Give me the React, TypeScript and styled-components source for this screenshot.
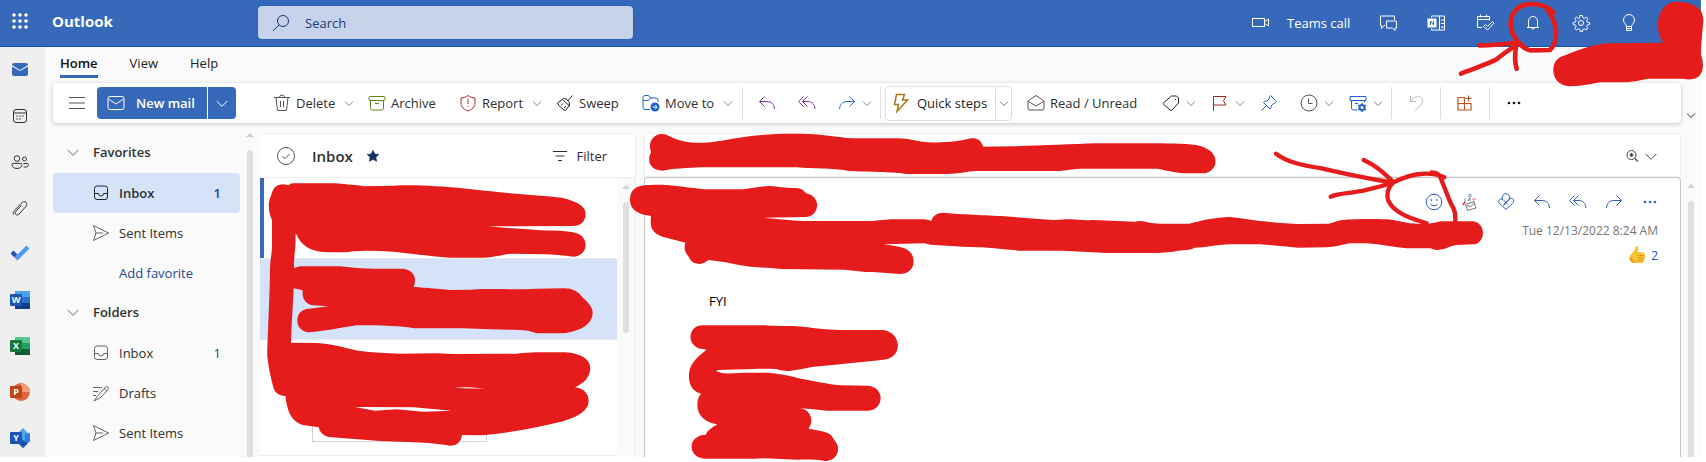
import React from "react";
import styled, { createGlobalStyle, css } from "styled-components";

const blue = "#3769ba";
const selected = "#d5e3fa";
const redInk = "#e61c1c";

const GlobalStyle = createGlobalStyle`
  * { box-sizing: border-box; }
  body { margin: 0; background: #fff; }
  body, button, input {
    font-family: "Open Sans", "Noto Sans", sans-serif;
    font-size: 13px;
    color: #303030;
  }
  button { border: 0; background: none; padding: 0; cursor: pointer; }
  ul { list-style: none; margin: 0; padding: 0; }
  svg { display: block; flex: none; }
`;

/* ---------- icons ---------- */

const shapes: Record<string, React.ReactNode> = {
  waffle: (
    <g fill="currentColor" stroke="none">
      {[4, 10, 16].map((y) => [4, 10, 16].map((x) => <circle key={`${x}-${y}`} cx={x} cy={y} r="1.8" />))}
    </g>
  ),
  search: <><circle cx="12" cy="8" r="5.5" /><path d="M8 12 2 18" /></>,
  video: <><rect x="1.5" y="5.5" width="12" height="8" /><path d="M13.5 8.5 17.5 6v7l-4-2.5" /></>,
  chat: <><path d="M6 12.500H5l-2.500 3v-3h-1v-9.500h14v4" /><path d="M7.500 8h10v7h-1.500v2.500L13.500 15h-6z" /></>,
  onenote: (
    <>
      <rect x="1" y="6" width="8" height="8" fill="currentColor" />
      <path d="M3.500 12V8l3 4V8" stroke={blue} />
      <path d="M4.500 4.500V3h13v14h-13v-1.500M12.500 3v14M14 7h3M14 10.500h3M14 14h3" />
    </>
  ),
  calCheck: <><path d="M7 14.500H2.500v-11h12v4M2.500 6.500h12M5.500 1.500v3M11.500 1.500v3" /><path d="m8.500 13.500 2-2 2 2 5-5 1.500 1.500-6.500 7z" /></>,
  bell: <path d="M4 14.500h12M5.500 14.500V8a4.500 4.500 0 0 1 9 0v6.500M8.500 14.500a1.500 1.500 0 0 0 3 0" />,
  gear: (
    <>
      <circle cx="10" cy="10" r="2.500" />
      <path d="m8.500 2.500.5 2.200-1.700.8L5.500 4 3.800 5.700 5 7.500l-.6 1.600-2.200.4v2l2.200.5.7 1.600-1.300 1.800L5.500 17l1.800-1.200 1.700.7.400 2h2l.4-2 1.600-.7 1.800 1.200 1.600-1.600-1.200-1.800.7-1.600 2.200-.5v-2l-2.200-.4-.6-1.600 1.100-1.800L15.100 4l-1.700 1.300-1.600-.7-.4-2.100z" />
    </>
  ),
  bulb: <path d="M7.500 13.500C7.500 11 4.500 10.500 4.500 7a5.500 5.500 0 0 1 11 0c0 3.500-3 4-3 6.500zM7.500 13.500v4h5v-4M7.500 15.500h5" />,
  mailSolid: (
    <g stroke="none">
      <path d="M2 5a2 2 0 0 1 2-2h12a2 2 0 0 1 2 2L10 10z" fill={blue} />
      <path d="M2 6.500 10 11l8-4.500V14a2 2 0 0 1-2 2H4a2 2 0 0 1-2-2z" fill={blue} />
    </g>
  ),
  calendar: (
    <>
      <rect x="3.500" y="3.500" width="13" height="13" rx="2.500" /><path d="M3.500 7h13" />
      <path d="M6.500 10h1M9.500 10h1M12.500 10h1M6.500 13h1M9.500 13h1" strokeWidth="1.500" />
    </>
  ),
  people: (
    <>
      <circle cx="7" cy="6.500" r="2.800" /><circle cx="14.500" cy="7" r="2" />
      <path d="M2 12.500c0-.8.500-1.200 1.200-1.200h7.600c.7 0 1.200.4 1.200 1.200 0 2.500-2 4-5 4s-5-1.500-5-4zM13.500 11.500h3.800c.7 0 1.200.4 1.200 1 0 2-2 3-5 2.500" />
    </>
  ),
  clip: <path d="m4.500 12.500 6.500-7c2-2.200 3.800-2.500 5-1.200s1 3-.5 4.700l-6.500 7c-1.200 1.200-2.500 1.200-3.300.4s-.7-2 .3-3.200l5.500-6M4.500 12.500c-1.500 1.600-1.500 3-1 4" />,
  menu: <path d="M2 4.500h16M2 10h16M2 15.500h16" />,
  mail: <><rect x="2" y="3.500" width="16" height="13" rx="2" /><path d="m2.500 6 7.500 5 7.500-5" /></>,
  trash: <path d="M2 4.500h16M4 4.500 5.500 17.500h9L16 4.500M7.500 4.500a2.500 2.500 0 0 1 5 0M8.500 8v6M11.500 8v6" />,
  archive: <><rect x="2" y="3.500" width="16" height="4" rx="1" /><path d="M3.500 7.500v8a1.500 1.500 0 0 0 1.500 1.500h10a1.500 1.500 0 0 0 1.500-1.500v-8M8 10.500h4" /></>,
  shield: <><path d="M10 2.500c2 1.500 4.500 2.300 7 2.500v5c0 4-3 6.500-7 8-4-1.500-7-4-7-8V5c2.500-.2 5-1 7-2.500zM10 6v5" /><path d="M10 13v1" /></>,
  broom: <path d="m17.500 2.500-5 5.500M7.500 6.500l7 6.500M8.500 5.500c2 0 3.500.5 4.500 2 1.200 1.500 1.500 3 1.500 4.500l-4 5.500c-3-1-6.500-4-8-7.500zM6 12.500l2-2M9 15l2-2" />,
  moveTo: (
    <>
      <path d="M9 16.500H4a2 2 0 0 1-2-2v-10a2 2 0 0 1 2-2h3.500l2 2.500H15a2 2 0 0 1 2 2v2M2 7.500h5.500L9.500 5" />
      <circle cx="14" cy="14" r="4.500" fill="currentColor" stroke="none" />
      <path d="M11.500 14h4.500M14.200 12l2 2-2 2" stroke="#fff" />
    </>
  ),
  reply: <path d="M7.500 3.500 2.500 8.500l5 5M2.500 8.500H10c4.500 0 7 2.500 7.500 7.500" />,
  replyAll: <path d="m6.500 3.500-5 5 5 5M10.500 3.500l-5 5 5 5M5.500 8.500H11c4 0 6.500 2.500 7 7.500" />,
  forward: <path d="m12.500 3.500 5 5-5 5M17.500 8.500H10c-4.500 0-7 2.500-7.500 7.500" />,
  bolt: <path d="M5.500 1.500h8l-2 5.500h5L6 18.500 7.500 11.500h-4z" strokeWidth="1.500" />,
  openMail: <path d="M2 8 10 2.500 18 8v7a2 2 0 0 1-2 2H4a2 2 0 0 1-2-2zM2.500 8.500 10 13l7.500-4.500" />,
  tag: <><path d="M10.500 3h5L17.500 5v5l-6.500 7a1.500 1.500 0 0 1-2 0L2.800 11.500a1.500 1.500 0 0 1 0-2z" /><path d="M14 6.500h1" /></>,
  flag: <path d="M3.500 18V3.500H16l-2.500 4.300 2.500 4.200H3.500" />,
  pin: <path d="m11.500 2.500 6 6c-.5 1.500-1.500 1.500-3 2l-2 2c-.5 1.500 0 2.500-1.500 3.500L4.500 9.500C5.500 8 7 8.500 8 8l2-2c.5-1.500.5-2.500 1.500-3.500zM7.500 12.500l-5 5" />,
  clock: <><circle cx="10" cy="10" r="8" /><path d="M9.500 5.500v5h4" /></>,
  policy: (
    <>
      <path d="M2 3.500h16v4H2zM3.500 7.500v7.500a2 2 0 0 0 2 2H9M7 10.500h3M16.500 7.500v2" />
      <circle cx="14" cy="14.500" r="2.500" strokeWidth="2" /><path d="M14 10v1.500M14 17.500V19M10 12l1.500 1M16.500 16l1.500 1M10 17l1.500-1M16.500 13l1.500-1" strokeWidth="1.500" />
    </>
  ),
  undo: <path d="M4.500 3v5.500H10M4.500 8.500 8 5c2.500-2.300 5-2.300 7-.5 2.200 2 2 5 0 7l-6 6" />,
  addins: <path d="M3 4.500h6.500v12.500H3zM3 10.500h13v6.500H9.500M13.500 2.500v6M10.500 5.500h6" strokeWidth="1.200" />,
  dots: <g fill="currentColor" stroke="none"><circle cx="5" cy="10" r="1.300" /><circle cx="10" cy="10" r="1.300" /><circle cx="15" cy="10" r="1.300" /></g>,
  inbox: <><rect x="3.500" y="3" width="13" height="13.500" rx="2.500" /><path d="M3.500 10.500H7.500a2.500 2.500 0 0 0 5 0h4" /></>,
  send: <path d="M2.500 2.500 17.500 10l-15 7.500L5 10zM5 10h7" />,
  drafts: <path d="M2 4.500h9M2 8.500h5M2 12.500h3M7 12.500 14.500 4c1.500-1.500 4 .5 2.500 2.500L9 15l-6 3zM13 5.500l2.800 2.500" />,
  checkCircle: <><circle cx="10" cy="10" r="8.500" /><path d="m6.500 10.500 2.500 2 4.500-4.500" /></>,
  star: <path d="m10 3 2.200 4.600 5 .5-3.700 3.500 1 5L10 14.200 5.500 16.600l1-5L2.800 8.100l5-.5z" fill="currentColor" />,
  filter: <path d="M3 5.500h14M5.500 10h9M8 14.500h4" />,
  zoomIn: <><circle cx="8.500" cy="9" r="4.500" /><path d="M6.500 9h4M8.500 7v4" strokeWidth="1.500" /><path d="m12 12.500 3 3" strokeWidth="1.500" stroke="#6b5a3a" /></>,
  smile: <><circle cx="10" cy="10" r="7.800" /><path d="M6.500 12c1.500 2.300 5.500 2.300 7 0" /><path d="M6.500 8h1.500M12 8h1.500" strokeWidth="1.500" /></>,
  loop: <path d="M6.500 7a3.800 3.800 0 1 1 7 0l-6 6.500M10 17.500l-6-5.500c-3-3 0-6.500 3-4.500l5 5M10 17.500l6.500-6c3-3 0-6.500-3-4.500l-6 5.500" />,
  viva: (
    <>
      <path d="M5.500 12 14 10l2 6-8.500 2.500zM6.500 13.500l4 1 4-3M8 9c0-2 1-2.500 3-2" stroke="#777" />
      <path d="M10 9V4" stroke="#8a98ad" /><circle cx="10" cy="3.500" r="1.300" stroke="#6b8ec9" />
      <path d="M3 13 5 9.500" stroke={redInk} strokeWidth="1.500" /><path d="m12.500 7.500 2.500-1 1 1" stroke="#d6454f" />
      <path d="M5 6v4M14 8v2" stroke="#7d9bcb" />
    </>
  ),
  thumb: (
    <g stroke="none">
      <path d="M9 1c2 0 2.500 1.200 2.300 3L10.800 7l5 .5c2 .2 2.500 1.500 1.800 2.800.8.800.7 2-.1 2.600.5.900.2 2-.7 2.500.3 1.500-.6 2.600-2.300 2.600H8c-3 0-5.500-1.500-5.500-5C2.500 9.500 6 8 7.500 5z" fill="#f9c235" />
      <path d="M11 10.500h6M11 13h6M11 15.500h5" stroke="#d99a1c" fill="none" />
      <path d="M2.500 13c0 3.500 2.500 5 5.500 5h6c-5 .5-8-1-8.500-5.500z" fill="#eaa424" />
    </g>
  ),
  todo: (
    <g stroke="none">
      <path d="m.5 9.500 3-3 4 4-3 3z" fill="#2357b0" /><path d="m4.500 13.500 12-12 3 3L7.500 16.500z" fill="#4f9af0" />
    </g>
  ),
};

const Icon = ({ name, size = 20 }: { name: string; size?: number }) => (
  <svg width={size} height={size} viewBox="0 0 20 20" fill="none" stroke="currentColor" aria-hidden="true">
    {shapes[name]}
  </svg>
);

const Chevron = ({ size = 12 }: { size?: number }) => (
  <svg width={size} height={size} viewBox="0 0 12 12" fill="none" stroke="currentColor" strokeWidth={12 / size} aria-hidden="true">
    <path d="m2 4.500 4 4 4-4" />
  </svg>
);

const OfficeIcon = ({ letter, colors }: { letter: string; colors: string[] }) => (
  <svg width="20" height="20" viewBox="0 0 20 20" aria-hidden="true">
    {letter === "P" ? (
      <>
        <circle cx="11" cy="10" r="9" fill={colors[0]} />
        <path d="M11 1a9 9 0 0 1 9 9h-9z" fill={colors[1]} />
      </>
    ) : letter === "Y" ? (
      <>
        <path d="m13 0 5 5v10l-5 5-5-5V5z" fill={colors[1]} />
        <path d="m15 6 5-1v9l-5 1z" fill={colors[0]} /><path d="m8 15 5-3 5 3-5 5z" fill={colors[2]} />
      </>
    ) : (
      <>
        <path d="M5 1h15v6H5z" fill={colors[1]} /><path d="M5 7h15v6H5z" fill={colors[0]} /><path d="M5 13h15v6H5z" fill={colors[2]} />
      </>
    )}
    <rect x="0" y="4" width="12" height="12" rx="1" fill={colors[3]} />
    <text x="6" y="13" textAnchor="middle" fontSize="9" fontWeight="700" fill="#fff" fontFamily="Open Sans, sans-serif">{letter}</text>
  </svg>
);

/* ---------- shell ---------- */

const Shell = styled.div`
  position: relative;
  display: flex;
  flex-direction: column;
  height: 100vh;
  border: 0 solid #fff;
  border-width: 0 5px 5px 0;
  background: #fafafa;
`;

const TopBar = styled.header`
  display: flex;
  align-items: center;
  flex: none;
  height: 47px;
  padding: 0 48px 4px 10px;
  background: ${blue};
  border-bottom: 1px solid #0f54b3;
  color: #fff;
`;

const TopButton = styled.button<{ $wide?: boolean }>`
  display: flex;
  align-items: center;
  justify-content: ${(p) => (p.$wide ? "flex-start" : "center")};
  gap: 16px;
  width: ${(p) => (p.$wide ? 126 : 48)}px;
  padding-left: ${(p) => (p.$wide ? 12 : 0)}px;
  height: 40px;
  color: #fff;
`;

const WaffleButton = styled(TopButton)`
  width: 20px;
`;

const Brand = styled.h1`
  margin: 0 0 0 22px;
  width: 206px;
  font-size: 15px;
  line-height: 20px;
  font-weight: 700;
`;

const SearchBox = styled.label`
  display: flex;
  align-items: center;
  gap: 12px;
  width: 375px;
  height: 33px;
  margin-top: 3px;
  padding-left: 13px;
  border-radius: 4px;
  background: #c6d3ea;
  box-shadow: 0 0 2px #0f54b3;
  color: #1d3a72;
`;

const SearchInput = styled.input`
  flex: 1;
  border: 0;
  outline: 0;
  background: none;
  color: #1d3a72;
  &::placeholder { color: #1d3a72; opacity: 1; }
`;

const TopActions = styled.nav`
  display: flex;
  margin-left: auto;
  margin-top: 3px;
`;

const Body = styled.div`
  display: flex;
  flex: 1;
  min-height: 0;
`;

const Rail = styled.nav`
  flex: none;
  width: 45px;
  background: #efefef;
  overflow: hidden;
`;

const RailButton = styled.button`
  display: flex;
  align-items: center;
  width: 100%;
  height: 46px;
  padding-left: 10px;
  color: #333;
`;

const Workspace = styled.div`
  display: flex;
  flex-direction: column;
  flex: 1;
  min-width: 0;
`;

/* ---------- ribbon ---------- */

const Tabs = styled.nav`
  display: flex;
  gap: 32px;
  height: 36px;
  padding-left: 15px;
`;

const Tab = styled.button<{ $active?: boolean }>`
  height: 31px;
  color: #222;
  ${(p) => p.$active && css`
    color: #111;
    box-shadow: inset 0 -3px ${blue};
    font-weight: 600;
  `}
`;

const RibbonRow = styled.div`
  display: flex;
  flex: none;
  margin-bottom: 10px;
  padding-left: 8px;
`;

const Ribbon = styled.div`
  display: flex;
  align-items: center;
  flex: 1;
  min-width: 0;
  height: 40px;
  padding-left: 4px;
  background: #fff;
  border-radius: 4px;
  box-shadow: 0 1px 4px rgba(0, 0, 0, 0.22);
`;

const RibbonToggle = styled.button`
  display: flex;
  justify-content: center;
  align-items: flex-end;
  width: 20px;
  height: 38px;
  color: #333;
`;

const Command = styled.button<{ $width: number; $iconOnly?: boolean; $tone?: string }>`
  display: flex;
  align-items: center;
  flex: none;
  gap: 4px;
  width: ${(p) => p.$width}px;
  height: 32px;
  padding: ${(p) => (p.$iconOnly ? "0 0 0 10px" : "0 8px 0 4px")};
  white-space: nowrap;
  & > svg:first-child { color: ${(p) => p.$tone ?? "#555"}; }
  & > svg:last-child:not(:first-child) {
    margin-left: ${(p) => (p.$iconOnly ? 0 : "auto")};
    color: #888;
  }
`;

const Divider = styled.span`
  flex: none;
  width: 1px;
  height: 32px;
  margin-right: 4px;
  background: #dedede;
`;

const NewMail = styled.div`
  display: flex;
  flex: none;
  gap: 1px;
  height: 32px;
  margin-right: 32px;
`;

const NewMailButton = styled.button<{ $split?: boolean }>`
  display: flex;
  align-items: center;
  justify-content: ${(p) => (p.$split ? "center" : "flex-start")};
  gap: 10px;
  width: ${(p) => (p.$split ? 28 : 110)}px;
  padding-left: ${(p) => (p.$split ? 0 : 9)}px;
  border-radius: ${(p) => (p.$split ? "0 4px 4px 0" : "4px 0 0 4px")};
  background: ${blue};
  color: #fff;
  font-weight: 600;
`;

const QuickSteps = styled.div`
  display: flex;
  flex: none;
  width: 127px;
  height: 35px;
  margin-right: 10px;
  border: 1px solid #dedede;
  border-radius: 4px;
`;

const QuickMain = styled.button`
  display: flex;
  align-items: center;
  gap: 6px;
  width: 109px;
  padding-left: 5px;
  color: #222;
  white-space: nowrap;
  & > svg { color: #a8791a; }
`;

const QuickMore = styled.button`
  display: flex;
  align-items: center;
  justify-content: center;
  flex: 1;
  border-left: 1px solid #dedede;
  color: #777;
`;

/* ---------- panes ---------- */

const Panes = styled.div`
  display: flex;
  flex: 1;
  min-height: 0;
`;

const ScrollRail = styled.div<{ $width: number }>`
  display: flex;
  flex-direction: column;
  align-items: center;
  flex: none;
  gap: 13px;
  width: ${(p) => p.$width}px;
  background: #fafafa;
`;

const ScrollUp = styled.span`
  border: 4px solid transparent;
  border-top: 0;
  border-bottom-color: #cfcfcf;
`;

const Thumb = styled.span<{ $height?: number }>`
  width: 6px;
  ${(p) => (p.$height ? `height: ${p.$height}px;` : "flex: 1;")}
  border-radius: ${(p) => (p.$height ? "3px" : "3px 3px 0 0")};
  background: #dfdfdf;
`;

const FolderPane = styled.aside`
  display: flex;
  flex: none;
  width: 213px;
  margin-right: 2px;
  padding-left: 8px;
  overflow: hidden;
`;

const FolderList = styled.div`
  width: 187px;
`;

const FolderScroll = styled(ScrollRail)`
  margin-left: 1px;
`;

const GroupHead = styled.button`
  display: flex;
  align-items: center;
  gap: 12px;
  width: 100%;
  height: 40px;
  padding: 0 0 2px 12px;
  font-weight: 600;
  & > svg { color: #666; }
`;

const FolderRow = styled.button<{ $active?: boolean }>`
  display: flex;
  align-items: center;
  gap: 8px;
  width: 100%;
  height: 40px;
  padding: 0 19px 0 38px;
  border-radius: 4px;
  text-align: left;
  background: ${(p) => (p.$active ? selected : "none")};
  font-weight: ${(p) => (p.$active ? 600 : 400)};
  & > svg { color: ${(p) => (p.$active ? "#222" : "#666")}; }
`;

const Count = styled.span`
  margin-left: auto;
  color: #1f478f;
`;

const AddFavorite = styled.a`
  display: flex;
  align-items: center;
  height: 40px;
  padding-left: 66px;
  color: #24498f;
  text-decoration: none;
`;

const MessagePane = styled.section`
  display: flex;
  flex-direction: column;
  flex: none;
  width: 376px;
  margin-right: 8px;
  background: #fff;
  border: 1px solid #ececec;
  border-width: 1px 1px 0 0;
  border-radius: 4px 4px 0 0;
`;

const MessageHead = styled.div`
  display: flex;
  align-items: center;
  flex: none;
  height: 44px;
  padding: 0 28px 0 16px;
  border-bottom: 1px solid #ececec;
`;

const SelectAll = styled.button`
  display: flex;
  color: #555;
`;

const ListTitle = styled.h2`
  margin: 0 12px 0 16px;
  font-size: 15px;
  line-height: 20px;
  font-weight: 600;
`;

const FavoriteButton = styled.button`
  color: #16335f;
`;

const FilterButton = styled.button`
  display: flex;
  align-items: center;
  gap: 6px;
  margin-left: auto;
`;

const MessageScroller = styled.div`
  display: flex;
  flex: 1;
  min-height: 0;
`;

const MessageList = styled.ul`
  flex: 1;
`;

const MessageRow = styled.li<{ $state?: "focused" | "selected" | "tall" }>`
  height: ${(p) => (p.$state === "tall" ? 116 : 81)}px;
  padding: 80px 130px 0 52px;
  border-bottom: 1px solid #ececec;
  ${(p) => p.$state === "focused" && `box-shadow: inset 4px 0 ${blue};`}
  ${(p) => p.$state === "selected" && `background: ${selected};`}
`;

const Attachment = styled.div`
  height: 22px;
  border: 1px solid #d4d4d4;
`;

const ListScroll = styled(ScrollRail)`
  padding-top: 7px;
`;

const Reading = styled.main`
  display: flex;
  flex-direction: column;
  flex: 1;
  min-width: 0;
`;

const SubjectBar = styled.div`
  display: flex;
  align-items: center;
  justify-content: flex-end;
  flex: none;
  height: 44px;
  padding: 2px 21px 0 0;
  background: #fff;
  border: 1px solid #eee;
  border-radius: 4px 4px 0 0;
`;

const ZoomButton = styled.button`
  display: flex;
  align-items: center;
  color: #444;
`;

const MessageCard = styled.article`
  flex: 1;
  padding: 10px 22px 0 64px;
  background: #fff;
  border: 1px solid #c6c6c6;
  border-bottom: 0;
  border-radius: 4px 4px 0 0;
`;

const Actions = styled.div`
  display: flex;
  justify-content: flex-end;
  margin-right: -10px;
`;

const Action = styled.button`
  display: flex;
  align-items: center;
  justify-content: center;
  width: 36px;
  height: 28px;
  color: #2f62b5;
`;

const Sent = styled.time`
  display: block;
  margin-top: 5px;
  font-size: 12px;
  line-height: 20px;
  color: #767676;
  text-align: right;
`;

const Reaction = styled.button`
  display: flex;
  align-items: center;
  gap: 4px;
  margin: 4px 0 0 auto;
  color: #1f57b5;
  font-size: 12px;
`;

const Text = styled.p`
  margin: 26px 0 0;
  font-size: 13px;
  line-height: 20px;
  color: #000;
`;

const Gutter = styled.div`
  flex: none;
  display: flex;
  width: 20px;
`;

const GutterScroll = styled(ScrollRail)`
  padding-top: 51px;
`;

/* ---------- red marker ---------- */

const Marker = styled.svg`
  position: absolute;
  left: 0;
  top: 0;
  pointer-events: none;
`;

const MarkerLayer = () => (
  <Marker width="1706" height="462" viewBox="0 0 1706 462" fill={redInk} aria-hidden="true">
    <g transform="translate(630 130) scale(.38265 .33333)">
      <path d="M52 48C52 25 70 11 83 12C98 12 105 22 125 29C150 37 175 40 190 38C230 36 250 28 285 23C340 13 400 9 465 12C510 14 545 22 580 25L700 25C735 26 740 32 765 35C780 38 825 38 850 34C880 30 885 24 900 25C912 27 920 38 923 50L1000 49C1080 47 1150 42 1220 40L1385 40C1440 42 1475 40 1500 52C1525 65 1530 80 1530 95C1530 115 1515 130 1495 130L1450 130C1420 128 1400 120 1378 116L1175 116C1150 118 1130 123 1118 123L905 123C880 124 855 132 830 132L722 132C700 128 680 127 570 123C545 115 480 117 435 112L190 112C150 114 110 116 85 122C60 122 50 105 50 88C50 75 55 70 55 65Q52 58 52 48Z" />
      <path d="M0 210C0 180 15 165 50 165C100 162 110 167 195 178L295 178C320 175 340 168 365 168C390 170 400 174 435 174C450 176 455 183 460 190C478 194 489 208 489 226C489 245 477 261 458 261L348 263C380 266 410 270 450 273L635 273C660 270 680 268 690 268L770 268L788 272C790 258 803 248 818 248C850 252 920 255 970 258L1095 269C1120 271 1130 268 1150 268C1170 269 1180 272 1210 270L1320 275C1330 271 1340 272 1362 279C1400 283 1430 281 1462 281C1490 272 1530 262 1568 261C1600 264 1620 270 1646 273C1680 277 1720 282 1750 282L1825 281C1840 279 1850 270 1864 270C1885 267 1970 265 1994 270Q2020 276 2038 280L2081 283L2120 274L2203 274C2218 276 2229 290 2229 308C2229 328 2218 343 2203 343L2160 345C2140 348 2130 360 2108 360C2098 360 2095 355 2090 355L2029 355C2000 352 1960 343 1925 340L1881 340C1860 344 1840 352 1820 352L1746 353C1710 350 1680 345 1646 343L1568 343C1530 345 1500 353 1475 353C1465 362 1430 360 1420 365L1380 369L1245 369L1130 362L1020 362C980 360 940 352 910 352L870 350L785 344L770 340L663 343C680 347 700 348 715 354C735 362 741 378 741 395C741 418 725 432 705 432L635 426L615 426L560 419L395 417C340 412 320 412 285 405C260 398 230 393 205 390Q192 402 180 402C160 400 158 388 152 378Q138 360 145 338L85 320C55 308 52 290 55 258C20 254 0 238 0 210Z" />
      <path d="M158 622C158 600 172 586 190 586L355 586C380 590 430 586 465 592C500 598 530 599 545 600L660 600C685 602 700 625 700 646C700 670 685 688 662 689C620 694 560 702 480 710C450 716 430 722 410 723C395 722 390 720 382 717C350 715 320 716 300 718L230 720L225 724L242 730C270 731 290 728 300 728L360 728C400 732 430 740 440 745C480 752 510 762 550 766L620 767C642 768 655 785 655 803C655 825 642 842 620 842L515 842C490 840 470 836 443 835C465 838 474 855 474 872C474 885 468 890 467 896C500 903 515 905 525 915C533 930 544 940 544 957C543 978 530 994 508 993C490 990 475 988 440 989L350 985L325 986L195 986C175 984 161 970 161 950C161 930 175 915 198 914C203 900 215 893 228 883C200 878 176 860 176 825C176 805 182 796 186 791C165 785 153 765 154 735C155 705 170 685 200 659L190 657C172 657 158 640 158 622Z" />
    </g>
    <g transform="translate(250 170) scale(.33333)">
      <path d="M64 75C68 55 80 43 100 43L115 46L125 40L255 40C280 43 300 43 345 49L430 47C500 44 560 48 650 56L780 70C830 75 870 76 940 84C975 95 1007 105 1007 132C1007 155 990 168 970 168L715 169C760 175 830 176 860 180C900 182 950 182 975 188C998 193 1007 210 1007 225C1007 245 990 260 970 260C940 257 920 254 885 253L785 251C760 253 740 261 700 263L600 263C550 260 480 250 430 245C390 244 350 240 310 244L290 247L235 247C200 245 175 240 155 218C145 207 140 195 137 189L136 230C132 260 132 280 132 294L150 289L270 289C310 294 340 296 370 296L460 296C480 298 495 312 495 330Q495 342 491 350C530 354 570 356 600 360L660 359C730 355 790 360 860 356L940 355C970 355 985 365 1000 385C1020 402 1028 415 1028 430C1025 470 980 485 940 490L860 490L835 482C800 478 760 480 720 478L640 475L495 475C450 468 400 466 320 466C270 474 220 484 178 487C155 485 142 470 142 452C142 430 155 417 178 416L235 409L190 406C170 403 155 390 158 361L131 355C128 420 124 470 123 518L200 519C250 522 290 535 325 542C370 548 410 548 450 551L560 550L610 552L800 551C830 546 900 547 945 547C990 550 1021 565 1021 597C1018 625 1000 640 975 652C1000 655 1016 670 1016 692C1014 725 980 742 930 756C860 772 780 790 690 796L636 795C634 815 620 828 600 827C570 822 530 818 495 817L390 813L235 801C220 797 207 785 207 772C190 768 165 768 150 762C120 748 112 720 106 678C85 678 72 665 69 648C62 620 55 590 52 560C52 500 58 420 60 300C60 270 66 250 66 230L66 150C55 125 52 100 64 75Z" />
      <path fill="#fff" d="M613 652L660 652L705 656L640 655ZM315 711L490 712L605 722L520 725L440 718L375 722Z" />
    </g>
    <g transform="translate(1230 0) scale(.33333)">
      <path d="M1284 75C1284 30 1310 3 1345 5C1385 8 1420 20 1420 60C1418 90 1413 130 1413 165C1420 180 1422 210 1412 222C1400 240 1380 240 1360 236L1255 236C1220 243 1200 247 1170 247L1110 247C1080 253 1050 259 1015 259C985 255 968 235 970 205C972 180 990 168 1010 164C1040 152 1090 133 1130 130L1300 128C1290 115 1284 95 1284 75Z" />
      <g fill="none" stroke={redInk} strokeWidth="14" strokeLinecap="round" strokeLinejoin="round">
        <path d="M970 38C955 18 930 12 900 12C860 14 840 45 842 75C845 110 875 145 900 151L960 150C975 135 980 110 977 85C974 60 962 42 950 24" />
        <path d="M693 221C720 210 780 190 800 178C820 160 845 145 860 135M748 136C780 136 810 134 850 129M858 140C855 160 853 185 860 206" />
      </g>
    </g>
    <g transform="translate(1260 130) scale(.33333)" fill="none" stroke={redInk} strokeWidth="13" strokeLinecap="round" strokeLinejoin="round">
      <path d="M48 71C80 95 120 105 185 115C240 128 320 145 395 157M311 90C345 105 370 125 400 157M212 200C235 190 270 190 310 182C340 175 380 165 400 157" />
      <path d="M553 142C530 132 500 130 480 132C450 134 420 148 400 157C380 175 380 200 385 212C400 245 440 262 500 280M515 127Q535 128 540 140C555 175 565 205 575 225C585 240 586 250 586 275" />
    </g>
  </Marker>
);

/* ---------- data ---------- */

type Cmd = { icon: string; label: string; width: number; tone?: string; menu?: boolean; iconOnly?: boolean };

const mailCommands: Cmd[] = [
  { icon: "trash", label: "Delete", width: 95, menu: true },
  { icon: "archive", label: "Archive", width: 91, tone: "#5b8a17" },
  { icon: "shield", label: "Report", width: 97, tone: "#b02a2a", menu: true },
  { icon: "broom", label: "Sweep", width: 86, tone: "#222" },
  { icon: "moveTo", label: "Move to", width: 105, tone: "#1f63d0", menu: true },
];
const replyCommands: Cmd[] = [
  { icon: "reply", label: "Reply", width: 40, tone: "#8632a0", iconOnly: true },
  { icon: "replyAll", label: "Reply all", width: 40, tone: "#8632a0", iconOnly: true },
  { icon: "forward", label: "Forward", width: 53, tone: "#2a6bd0", menu: true, iconOnly: true },
];
const organizeCommands: Cmd[] = [
  { icon: "openMail", label: "Read / Unread", width: 129 },
  { icon: "tag", label: "Categorize", width: 49, tone: "#222", menu: true, iconOnly: true },
  { icon: "flag", label: "Flag", width: 49, tone: "#a52424", menu: true, iconOnly: true },
  { icon: "pin", label: "Pin", width: 40, tone: "#1f63d0", iconOnly: true },
  { icon: "clock", label: "Snooze", width: 49, menu: true, iconOnly: true },
  { icon: "policy", label: "Assign policy", width: 53, tone: "#1f63d0", menu: true, iconOnly: true },
];

const Commands = ({ items }: { items: Cmd[] }) => (
  <>
    {items.map((c) => (
      <Command key={c.label} $width={c.width} $iconOnly={c.iconOnly} $tone={c.tone} aria-label={c.label}>
        <Icon name={c.icon} />
        {!c.iconOnly && <span>{c.label}</span>}
        {c.menu && <Chevron />}
      </Command>
    ))}
  </>
);

const topIcons = [
  ["chat", "Chat"], ["onenote", "OneNote feed"], ["calCheck", "My day"],
  ["bell", "Notifications"], ["gear", "Settings"], ["bulb", "Tips"],
];
const railIcons = [
  ["mailSolid", "Mail"], ["calendar", "Calendar"], ["people", "People"], ["clip", "Files"], ["todo", "To Do"],
];
const officeApps: [string, string, string[]][] = [
  ["W", "Word", ["#2b6fd0", "#4fa3ee", "#163d8a", "#1c56b4"]],
  ["X", "Excel", ["#21a062", "#5cc58c", "#155c36", "#137a3d"]],
  ["P", "PowerPoint", ["#e0653f", "#f59a74", "#b53a18", "#bf4318"]],
  ["Y", "Yammer", ["#2f7fe0", "#4fa3ee", "#1b50ae", "#1c56b4"]],
];
const actions = [
  ["smile", "React"], ["viva", "Viva Insights"], ["loop", "Loop"], ["reply", "Reply"],
  ["replyAll", "Reply all"], ["forward", "Forward"], ["dots", "More actions"],
];

export default function App() {
  return (
    <>
      <GlobalStyle />
      <Shell>
        <TopBar>
          <WaffleButton aria-label="App launcher"><Icon name="waffle" /></WaffleButton>
          <Brand>Outlook</Brand>
          <SearchBox>
            <Icon name="search" />
            <SearchInput type="search" placeholder="Search" aria-label="Search" />
          </SearchBox>
          <TopActions>
            <TopButton $wide><Icon name="video" />Teams call</TopButton>
            {topIcons.map(([icon, label]) => (
              <TopButton key={icon} aria-label={label}><Icon name={icon} /></TopButton>
            ))}
          </TopActions>
        </TopBar>
        <Body>
          <Rail>
            {railIcons.map(([icon, label]) => (
              <RailButton key={icon} aria-label={label}><Icon name={icon} /></RailButton>
            ))}
            {officeApps.map(([letter, label, colors]) => (
              <RailButton key={letter} aria-label={label}><OfficeIcon letter={letter} colors={colors} /></RailButton>
            ))}
          </Rail>
          <Workspace>
            <Tabs>
              <Tab $active>Home</Tab>
              <Tab>View</Tab>
              <Tab>Help</Tab>
            </Tabs>
            <RibbonRow>
              <Ribbon>
                <Command $width={40} $iconOnly aria-label="Toggle navigation"><Icon name="menu" /></Command>
                <NewMail>
                  <NewMailButton><Icon name="mail" />New mail</NewMailButton>
                  <NewMailButton $split aria-label="New item menu"><Chevron size={16} /></NewMailButton>
                </NewMail>
                <Commands items={mailCommands} />
                <Divider />
                <Commands items={replyCommands} />
                <Divider />
                <QuickSteps>
                  <QuickMain><Icon name="bolt" />Quick steps</QuickMain>
                  <QuickMore aria-label="Quick steps menu"><Chevron /></QuickMore>
                </QuickSteps>
                <Commands items={organizeCommands} />
                <Divider />
                <Command $width={44} $iconOnly $tone="#b8b8b8" aria-label="Undo"><Icon name="undo" /></Command>
                <Divider />
                <Command $width={44} $iconOnly $tone="#c0561e" aria-label="Add-ins"><Icon name="addins" /></Command>
                <Divider />
                <Command $width={40} $iconOnly $tone="#111" aria-label="More commands"><Icon name="dots" /></Command>
              </Ribbon>
              <RibbonToggle aria-label="Ribbon display options"><Chevron /></RibbonToggle>
            </RibbonRow>
            <Panes>
              <FolderPane>
                <FolderList>
                  <GroupHead><Chevron size={16} />Favorites</GroupHead>
                  <FolderRow $active><Icon name="inbox" />Inbox<Count>1</Count></FolderRow>
                  <FolderRow><Icon name="send" />Sent Items</FolderRow>
                  <AddFavorite href="#">Add favorite</AddFavorite>
                  <GroupHead><Chevron size={16} />Folders</GroupHead>
                  <FolderRow><Icon name="inbox" />Inbox<Count>1</Count></FolderRow>
                  <FolderRow><Icon name="drafts" />Drafts</FolderRow>
                  <FolderRow><Icon name="send" />Sent Items</FolderRow>
                </FolderList>
                <FolderScroll $width={17}><ScrollUp /><Thumb /></FolderScroll>
              </FolderPane>
              <MessagePane>
                <MessageHead>
                  <SelectAll aria-label="Select all"><Icon name="checkCircle" /></SelectAll>
                  <ListTitle>Inbox</ListTitle>
                  <FavoriteButton aria-label="Remove from favorites"><Icon name="star" size={16} /></FavoriteButton>
                  <FilterButton><Icon name="filter" />Filter</FilterButton>
                </MessageHead>
                <MessageScroller>
                  <MessageList>
                    <MessageRow $state="focused" />
                    <MessageRow $state="selected" />
                    <MessageRow $state="tall"><Attachment /></MessageRow>
                  </MessageList>
                  <ListScroll $width={18}><ScrollUp /><Thumb $height={131} /></ListScroll>
                </MessageScroller>
              </MessagePane>
              <Reading>
                <SubjectBar>
                  <ZoomButton aria-label="Zoom"><Icon name="zoomIn" /><Chevron size={16} /></ZoomButton>
                </SubjectBar>
                <MessageCard>
                  <Actions>
                    {actions.map(([icon, label]) => (
                      <Action key={icon} aria-label={label}><Icon name={icon} /></Action>
                    ))}
                  </Actions>
                  <Sent>Tue 12/13/2022 8:24 AM</Sent>
                  <Reaction aria-label="Like, 2"><Icon name="thumb" /><span>2</span></Reaction>
                  <Text>FYI</Text>
                </MessageCard>
              </Reading>
              <Gutter>
                <GutterScroll $width={20}><ScrollUp /><Thumb /></GutterScroll>
              </Gutter>
            </Panes>
          </Workspace>
        </Body>
        <MarkerLayer />
      </Shell>
    </>
  );
}
